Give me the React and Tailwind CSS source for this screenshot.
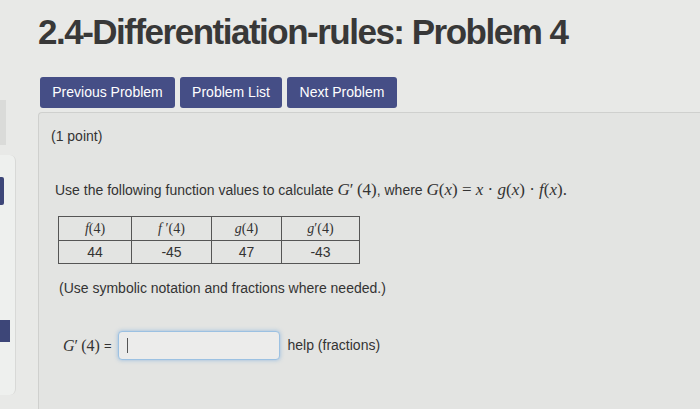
import React from "react";

const sans = { fontFamily: '"Liberation Sans", Arial, sans-serif' };
const serif = { fontFamily: '"Liberation Serif", "Times New Roman", serif' };

const Btn = ({ children, w }) => (
  <button
    className={`h-[31px] ${w} rounded-[3px] bg-[#454e86] text-white text-[14px] flex items-center justify-center`}
    style={sans}
  >
    {children}
  </button>
);

export default function App() {
  return (
    <div className="w-[700px] h-[409px] overflow-hidden bg-[#e8e9e7] flex text-[#333]" style={sans}>
      {/* SIDEBAR EDGE */}
      <div className="w-[16px] flex flex-col pt-[100px]">
        <div className="w-[6px] h-[45px] bg-[#dadbd9]" />
        <div className="mt-[10px] h-[240px] bg-[#eef0ee] rounded-r-[6px] border-r border-[#d8d9d7] flex flex-col">
          <div className="mt-[22px] w-[4px] h-[28px] bg-[#3d4678] rounded-r-[2px]" />
          <div className="mt-[115px] w-[10px] h-[22px] bg-[#3d4678]" />
        </div>
      </div>

      {/* MAIN */}
      <div className="flex-1 flex flex-col pl-[22px]">
        <h1 className="mt-[12px] text-[35px] leading-[40px] font-bold text-[#383838] tracking-[-1.5px]">
          2.4-Differentiation-rules: Problem 4
        </h1>

        <div className="mt-[25px] flex gap-[5px] pl-[2px]">
          <Btn w="w-[135px]">Previous Problem</Btn>
          <Btn w="w-[102px]">Problem List</Btn>
          <Btn w="w-[110px]">Next Problem</Btn>
        </div>

        {/* PROBLEM PANEL */}
        <div className="mt-[4px] flex-1 border-t border-l border-[#cfd0ce] rounded-tl-[4px] bg-[#e3e4e2] pl-[12px] pt-[14px] text-[14px]">
          <p className="leading-[18px]">(1 point)</p>

          <p className="mt-[35px] leading-[20px] pl-[4px]">
            Use the following function values to calculate{" "}
            <span className="text-[17px]" style={serif}>
              <i>G</i>′&thinsp;(4)
            </span>
            , where{" "}
            <span className="text-[17px]" style={serif}>
              <i>G</i>(<i>x</i>) = <i>x</i> · <i>g</i>(<i>x</i>) · <i>f</i>(<i>x</i>).
            </span>
          </p>

          <table className="mt-[16px] ml-[7px] border-collapse border border-[#555] text-[14px]">
            <tbody>
              <tr className="h-[24px]">
                <td className="w-[73px] border border-[#555] text-center" style={serif}>
                  <i>f</i>(4)
                </td>
                <td className="w-[80px] border border-[#555] text-center" style={serif}>
                  <i>f</i> ′(4)
                </td>
                <td className="w-[70px] border border-[#555] text-center" style={serif}>
                  <i>g</i>(4)
                </td>
                <td className="w-[78px] border border-[#555] text-center" style={serif}>
                  <i>g</i>′(4)
                </td>
              </tr>
              <tr className="h-[23px]">
                <td className="border border-[#555] text-center">44</td>
                <td className="border border-[#555] text-center">-45</td>
                <td className="border border-[#555] text-center">47</td>
                <td className="border border-[#555] text-center">-43</td>
              </tr>
            </tbody>
          </table>

          <p className="mt-[14px] ml-[8px] leading-[20px]">(Use symbolic notation and fractions where needed.)</p>

          <div className="mt-[33px] ml-[12px] flex items-center">
            <span className="text-[16px]" style={serif}>
              <i>G</i>′&thinsp;(4)
            </span>
            <span className="ml-[4px] text-[13px]">=</span>
            <div className="ml-[6px] w-[162px] h-[29px] rounded-[4px] border border-[#9cc1e2] bg-[#ececeb] shadow-[0_0_4px_rgba(100,160,220,0.6)] flex items-center pl-[8px]">
              <div className="w-px h-[15px] bg-[#555]" />
            </div>
            <span className="ml-[8px] text-[14px]">help (fractions)</span>
          </div>
        </div>
      </div>
    </div>
  );
}
